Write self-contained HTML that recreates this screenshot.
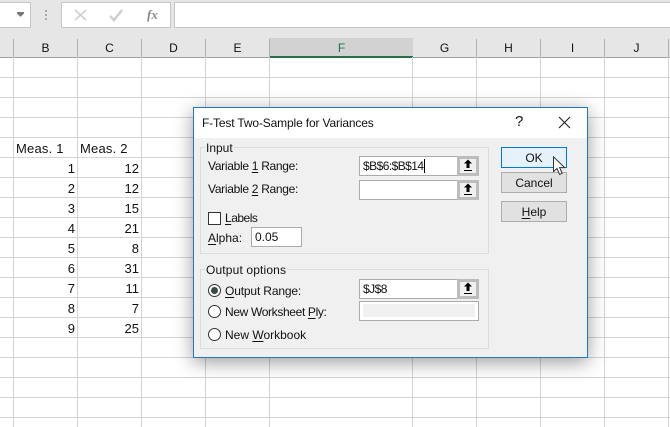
<!DOCTYPE html>
<html><head><meta charset="utf-8"><style>
html,body{margin:0;padding:0}
body{width:670px;height:427px;overflow:hidden;position:relative;background:#fff;font-family:"Liberation Sans",sans-serif;color:#111}
.a{position:absolute;box-sizing:border-box}
.h{position:absolute;height:1px;left:0;width:670px;background:#d4d4d4}
.v{position:absolute;width:1px;top:57px;height:370px;background:#d4d4d4}
.hd{position:absolute;top:38px;height:19px;line-height:20px;font-size:12px;text-align:center;color:#111}
.t{position:absolute;font-size:12px;line-height:14px;white-space:nowrap;color:#111}
.c{position:absolute;font-size:13px;line-height:16px;white-space:nowrap;color:#111}
.n{text-align:right;width:40px}
.inp{position:absolute;box-sizing:border-box;background:#fff;border:1px solid #ababab;font-size:12px;line-height:18px;padding-left:3px;color:#111;letter-spacing:-.55px}
.up{position:absolute;box-sizing:border-box;width:22px;height:20px;background:#f0f0f0;border:3px solid #bcbcbc}
.btn{position:absolute;box-sizing:border-box;left:501px;width:66px;height:21px;background:#e1e1e1;border:1px solid #adadad;text-align:center;font-size:12px;line-height:21px;color:#111}
.gb{position:absolute;box-sizing:border-box;left:200px;width:289px;border:1px solid #dcdcdc}
.rad{position:absolute;box-sizing:border-box;width:13px;height:13px;border-radius:50%;border:1px solid #333;background:#fff}
u{text-decoration-thickness:1px;text-underline-offset:2px}
</style></head><body>
<div class="a" style="left:0;top:0;width:670px;height:38px;background:#e6e6e6"></div>
<div class="a" style="left:-2px;top:2px;width:33px;height:26px;background:#fff;border:1px solid #c6c6c6"></div>
<svg class="a" style="left:17px;top:12px" width="7" height="5"><path d="M0 0H7V1.5L4 4.5H3L0 1.5Z" fill="#777"/></svg>
<div class="a" style="left:45px;top:10px;width:2px;height:2px;background:#aaa"></div>
<div class="a" style="left:45px;top:14px;width:2px;height:2px;background:#aaa"></div>
<div class="a" style="left:45px;top:18px;width:2px;height:2px;background:#aaa"></div>
<div class="a" style="left:61px;top:2px;width:110px;height:26px;background:#fff;border:1px solid #c6c6c6"></div>
<svg class="a" style="left:70px;top:5px" width="100" height="20"><path d="M5 5L16 15M16 5L5 15" stroke="#d0d0d0" stroke-width="1.6" fill="none"/><path d="M40 11L44 15L52 5" stroke="#d0d0d0" stroke-width="2.6" fill="none"/></svg>
<div class="a" style="left:147px;top:6px;font:italic bold 13px 'Liberation Serif',serif;color:#888;line-height:17px">fx</div>
<div class="a" style="left:174px;top:2px;width:500px;height:26px;background:#fff;border:1px solid #c6c6c6"></div>

<div class="a" style="left:0;top:38px;width:670px;height:19px;background:#e6e6e6"></div>
<div class="a" style="left:269px;top:38px;width:144px;height:19px;background:#d2d2d2"></div>
<div class="a" style="left:0;top:57px;width:670px;height:1px;background:#a0a0a0"></div>
<div class="a" style="left:269px;top:56px;width:144px;height:2px;background:#217346"></div>
<div class="a" style="left:13px;top:39px;width:1px;height:18px;background:#b0b0b0"></div>
<div class="a" style="left:77px;top:39px;width:1px;height:18px;background:#b0b0b0"></div>
<div class="a" style="left:141px;top:39px;width:1px;height:18px;background:#b0b0b0"></div>
<div class="a" style="left:205px;top:39px;width:1px;height:18px;background:#b0b0b0"></div>
<div class="a" style="left:269px;top:39px;width:1px;height:18px;background:#b0b0b0"></div>
<div class="a" style="left:476px;top:39px;width:1px;height:18px;background:#b0b0b0"></div>
<div class="a" style="left:540px;top:39px;width:1px;height:18px;background:#b0b0b0"></div>
<div class="a" style="left:604px;top:39px;width:1px;height:18px;background:#b0b0b0"></div>
<div class="a" style="left:668px;top:39px;width:1px;height:18px;background:#b0b0b0"></div>
<div class="hd" style="left:14px;width:63px">B</div>
<div class="hd" style="left:78px;width:63px">C</div>
<div class="hd" style="left:142px;width:63px">D</div>
<div class="hd" style="left:206px;width:63px">E</div>
<div class="hd" style="left:270px;width:143px;color:#217346">F</div>
<div class="hd" style="left:413px;width:63px">G</div>
<div class="hd" style="left:477px;width:63px">H</div>
<div class="hd" style="left:541px;width:63px">I</div>
<div class="hd" style="left:605px;width:63px">J</div>

<div class="h" style="top:77px"></div><div class="h" style="top:97px"></div><div class="h" style="top:117px"></div><div class="h" style="top:137px"></div><div class="h" style="top:157px"></div><div class="h" style="top:177px"></div><div class="h" style="top:197px"></div><div class="h" style="top:217px"></div><div class="h" style="top:237px"></div><div class="h" style="top:257px"></div><div class="h" style="top:277px"></div><div class="h" style="top:297px"></div><div class="h" style="top:317px"></div><div class="h" style="top:337px"></div><div class="h" style="top:357px"></div><div class="h" style="top:377px"></div><div class="h" style="top:397px"></div><div class="h" style="top:417px"></div>
<div class="v" style="left:13px"></div><div class="v" style="left:77px"></div><div class="v" style="left:141px"></div><div class="v" style="left:205px"></div><div class="v" style="left:269px"></div><div class="v" style="left:412px"></div><div class="v" style="left:476px"></div><div class="v" style="left:540px"></div><div class="v" style="left:604px"></div><div class="v" style="left:668px"></div>

<div class="c" style="left:16px;top:141px;letter-spacing:.2px">Meas. 1</div>
<div class="c" style="left:80px;top:141px;letter-spacing:.2px">Meas. 2</div>
<div class="c n" style="left:35px;top:161px">1</div><div class="c n" style="left:99px;top:161px">12</div>
<div class="c n" style="left:35px;top:181px">2</div><div class="c n" style="left:99px;top:181px">12</div>
<div class="c n" style="left:35px;top:201px">3</div><div class="c n" style="left:99px;top:201px">15</div>
<div class="c n" style="left:35px;top:221px">4</div><div class="c n" style="left:99px;top:221px">21</div>
<div class="c n" style="left:35px;top:241px">5</div><div class="c n" style="left:99px;top:241px">8</div>
<div class="c n" style="left:35px;top:261px">6</div><div class="c n" style="left:99px;top:261px">31</div>
<div class="c n" style="left:35px;top:281px">7</div><div class="c n" style="left:99px;top:281px">11</div>
<div class="c n" style="left:35px;top:301px">8</div><div class="c n" style="left:99px;top:301px">7</div>
<div class="c n" style="left:35px;top:321px">9</div><div class="c n" style="left:99px;top:321px">25</div>

<div class="a" style="left:193px;top:107px;width:395px;height:251px;background:#f0f0f0;border:1px solid #1f78c1;box-shadow:0 4px 18px rgba(0,0,0,.4)"></div>
<div class="a" style="left:194px;top:108px;width:393px;height:30px;background:#fff"></div>
<div class="t" style="left:202px;top:116px;letter-spacing:-.15px">F-Test Two-Sample for Variances</div>
<div class="t" style="left:515px;top:114px;font-size:15px;line-height:16px">?</div>
<svg class="a" style="left:558px;top:116px" width="13" height="13"><path d="M1 1L12 12M12 1L1 12" stroke="#222" stroke-width="1.1" fill="none"/></svg>

<div class="gb" style="top:147px;height:107px"></div>
<div class="t" style="left:205px;top:141px;background:#f0f0f0;padding:0 1px">Input</div>
<div class="t" style="left:208px;top:159px;letter-spacing:-.3px">Variable <u>1</u> Range:</div>
<div class="t" style="left:208px;top:182px;letter-spacing:-.3px">Variable <u>2</u> Range:</div>
<div class="inp" style="left:359px;top:156px;width:120px;height:20px">$B$6:$B$14<span style="display:inline-block;width:1px;height:14px;background:#000;vertical-align:-3px"></span></div>
<div class="up" style="left:457px;top:156px"></div>
<div class="inp" style="left:359px;top:180px;width:120px;height:20px"></div>
<div class="up" style="left:457px;top:180px"></div>
<div class="a" style="left:208px;top:212px;width:13px;height:13px;background:#fff;border:1px solid #333"></div>
<div class="t" style="left:225px;top:211px;letter-spacing:-.5px"><u>L</u>abels</div>
<div class="t" style="left:208px;top:231px"><u>A</u>lpha:</div>
<div class="inp" style="left:251px;top:227px;width:51px;height:20px;letter-spacing:0">0.05</div>

<div class="gb" style="top:269px;height:80px"></div>
<div class="t" style="left:205px;top:263px;background:#f0f0f0;padding:0 1px;letter-spacing:.15px">Output options</div>
<div class="rad" style="left:208px;top:284px"></div>
<div class="a" style="left:211px;top:287px;width:7px;height:7px;border-radius:50%;background:#3c4a45"></div>
<div class="t" style="left:225px;top:284px;letter-spacing:-.15px"><u>O</u>utput Range:</div>
<div class="rad" style="left:208px;top:305px"></div>
<div class="t" style="left:225px;top:305px;letter-spacing:-.35px">New Worksheet <u>P</u>ly:</div>
<div class="rad" style="left:208px;top:328px"></div>
<div class="t" style="left:225px;top:328px">New <u>W</u>orkbook</div>
<div class="inp" style="left:359px;top:279px;width:120px;height:20px">$J$8</div>
<div class="up" style="left:457px;top:279px"></div>
<div class="a" style="left:359px;top:301px;width:120px;height:20px;background:#fff;border:1px solid #ababab"></div>
<div class="a" style="left:363px;top:304px;width:112px;height:13px;background:#f0f0f0"></div>

<svg class="a" style="left:457px;top:156px" width="22" height="20"><path d="M11 3.5L15 7.5H12.5V12H9.5V7.5H7Z" fill="#000"/><rect x="7" y="14" width="8" height="1" fill="#000"/></svg>
<svg class="a" style="left:457px;top:180px" width="22" height="20"><path d="M11 3.5L15 7.5H12.5V12H9.5V7.5H7Z" fill="#000"/><rect x="7" y="14" width="8" height="1" fill="#000"/></svg>
<svg class="a" style="left:457px;top:279px" width="22" height="20"><path d="M11 3.5L15 7.5H12.5V12H9.5V7.5H7Z" fill="#000"/><rect x="7" y="14" width="8" height="1" fill="#000"/></svg>

<div class="btn" style="top:147px;background:#e5f1fb;border-color:#0078d7">OK</div>
<div class="btn" style="top:172px">Cancel</div>
<div class="btn" style="top:201px"><u>H</u>elp</div>
<svg class="a" style="left:552px;top:156px" width="15" height="21"><path d="M1.5 .8V15.5L5 12.5L7.6 18.5L10.2 17.3L7.6 11.6H12.6Z" fill="#fff" stroke="#333" stroke-width="1"/></svg>
</body></html>
